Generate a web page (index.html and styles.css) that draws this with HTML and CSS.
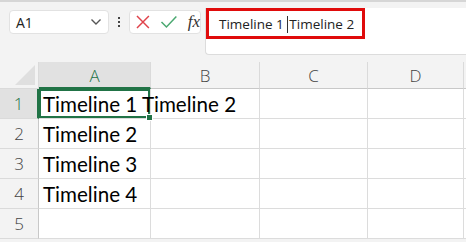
FILE: index.html
```html
<!DOCTYPE html>
<html>
<head>
  <title>Sheet</title>
  <link rel="stylesheet" href="styles.css">
</head>
<body>
  <div class="toolbar">
    <div class="namebox">
      <span>A1</span>
      <svg width="12" height="8" viewBox="0 0 12 8"><path d="M1.5 1.5 L6 6 L10.5 1.5" fill="none" stroke="#555" stroke-width="1.4"/></svg>
    </div>
    <div class="dots"><i></i><i></i><i></i></div>
    <div class="fxbox">
      <svg width="16" height="16" viewBox="0 0 16 16"><path d="M2 2 L14 14 M14 2 L2 14" stroke="#e0434b" stroke-width="1.5"/></svg>
      <svg width="18" height="16" viewBox="0 0 18 16"><path d="M1.5 8 L6.5 13 L16.5 2.5" fill="none" stroke="#4aa870" stroke-width="1.5"/></svg>
      <span class="fx">fx</span>
    </div>
    <div class="formula">
      <div class="highlight">Timeline 1 <span class="caret"></span>Timeline 2</div>
    </div>
  </div>

  <div class="grid">
    <div class="corner"><span class="tri"></span></div>
    <div class="colhead sel">A</div>
    <div class="colhead">B</div>
    <div class="colhead">C</div>
    <div class="colhead">D</div>
    <div class="colhead"></div>

    <div class="rowhead sel">1</div>
    <div class="cell active">Timeline 1 Timeline 2<span class="handle"></span></div>
    <div class="cell"></div><div class="cell"></div><div class="cell"></div><div class="cell"></div>

    <div class="rowhead">2</div>
    <div class="cell">Timeline 2</div>
    <div class="cell"></div><div class="cell"></div><div class="cell"></div><div class="cell"></div>

    <div class="rowhead">3</div>
    <div class="cell">Timeline 3</div>
    <div class="cell"></div><div class="cell"></div><div class="cell"></div><div class="cell"></div>

    <div class="rowhead">4</div>
    <div class="cell">Timeline 4</div>
    <div class="cell"></div><div class="cell"></div><div class="cell"></div><div class="cell"></div>

    <div class="rowhead">5</div>
    <div class="cell"></div>
    <div class="cell"></div><div class="cell"></div><div class="cell"></div><div class="cell"></div>
  </div>
</body>
</html>
```

FILE: styles.css
```css
body { margin: 0; background: #f3f3f3; font-family: "Open Sans", "Noto Sans", sans-serif; overflow: hidden; }

.toolbar { display: flex; align-items: flex-start; height: 62px; border-top: 2px solid #d6d6d6; box-sizing: border-box; padding-top: 6px; }
.namebox { margin: 2px 0 0 9px; width: 100px; height: 24px; box-sizing: border-box; background: #fff; border: 1px solid #e2e2e2; border-radius: 4px; display: flex; align-items: center; justify-content: space-between; padding: 0 6px 0 6px; font-size: 14px; color: #222; }
.dots { display: flex; flex-direction: column; gap: 2px; margin: 9px 0 0 9px; }
.dots i { display: block; width: 2px; height: 2px; background: #444; }
.fxbox { margin: 2px 0 0 9px; width: 72px; height: 24px; box-sizing: border-box; background: #fff; border: 1px solid #e2e2e2; border-radius: 4px; display: flex; align-items: center; gap: 9px; padding-left: 5px; }
.fx { font-family: "Liberation Serif", serif; font-style: italic; font-size: 17px; color: #333; margin-left: 1px; }
.formula { flex: 1; margin-left: 4px; height: 46px; background: #fff; border: 1px solid #dcdcdc; border-top: none; border-right: none; border-radius: 0 0 0 4px; }
.highlight { width: 159px; height: 31px; box-sizing: border-box; border: 3px solid #e00b0b; font-size: 13.5px; color: #222; padding: 4px 0 0 10px; white-space: nowrap; }
.caret { display: inline-block; width: 1px; height: 17px; background: #333; vertical-align: -4px; margin-right: 1px; }

.grid { display: grid; grid-template-columns: 39px 112px 109px 108px 96px 1fr; grid-template-rows: 27px repeat(5, 30px); background: #fff; }
.corner { background: #f3f3f3; border-right: 1px solid #dadada; border-bottom: 1px solid #dadada; position: relative; }
.tri { position: absolute; right: 3px; bottom: 3px; width: 0; height: 0; border-left: 20px solid transparent; border-bottom: 20px solid #dfdfdf; }
.colhead { background: #f3f3f3; border-right: 1px solid #dadada; border-bottom: 1px solid #c8c8c8; text-align: center; font-size: 17px; line-height: 27px; color: #444; font-family: "Open Sans", sans-serif; font-weight: 300; }
.colhead.sel { background: #e1e1e1; color: #217346; border-bottom: 2px solid #217346; }
.rowhead { background: #f3f3f3; border-right: 1px solid #c8c8c8; border-bottom: 1px solid #dadada; text-align: center; font-size: 17px; line-height: 30px; color: #444; font-weight: 300; }
.rowhead.sel { background: #e1e1e1; color: #217346; border-right: 2px solid #217346; }
.cell { border-right: 1px solid #dcdcdc; border-bottom: 1px solid #dcdcdc; font-family: "Lato", sans-serif; font-size: 20.6px; line-height: 30px; color: #000; padding-left: 4px; white-space: nowrap; }
.cell.active { position: relative; overflow: visible; z-index: 1; box-shadow: inset 0 0 0 2px #217346; }
.handle { position: absolute; right: -3px; bottom: -3px; width: 5px; height: 5px; background: #217346; border: 1px solid #fff; }
```
